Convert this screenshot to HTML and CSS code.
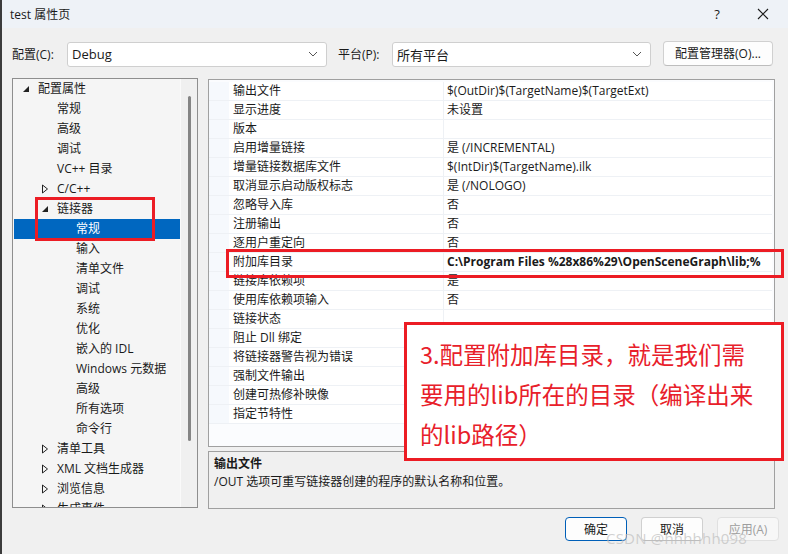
FILE: index.html
```html
<!DOCTYPE html>
<html lang="zh-CN">
<head>
<meta charset="utf-8">
<title>test 属性页</title>
<link rel="stylesheet" href="styles.css">
</head>
<body>
<div class="window">
  <div class="titlebar">
    <span class="title">test 属性页</span>
    <span class="tb-btns"><span class="tb-help">?</span><span class="tb-close">
      <svg width="12" height="12" viewBox="0 0 12 12"><path d="M1 1L11 11M11 1L1 11" stroke="#1a1a1a" stroke-width="1.1"/></svg></span></span>
  </div>

  <div class="configrow">
    <span class="lbl">配置(C):</span>
    <div class="combo combo-cfg"><span>Debug</span><svg class="chev" width="10" height="6" viewBox="0 0 10 6"><path d="M1 1L5 5L9 1" fill="none" stroke="#555" stroke-width="1"/></svg></div>
    <span class="lbl lbl-plat">平台(P):</span>
    <div class="combo combo-plat"><span>所有平台</span><svg class="chev" width="10" height="6" viewBox="0 0 10 6"><path d="M1 1L5 5L9 1" fill="none" stroke="#555" stroke-width="1"/></svg></div>
    <button class="btn btn-mgr">配置管理器(O)...</button>
  </div>

  <div class="main">
    <div class="tree">
      <div class="tree-list">
        <div class="ti l0"><svg class="arr" width="8" height="8" viewBox="0 0 8 8"><path d="M7 1V7H1Z" fill="#222"/></svg>配置属性</div>
        <div class="ti l1">常规</div>
        <div class="ti l1">高级</div>
        <div class="ti l1">调试</div>
        <div class="ti l1">VC++ 目录</div>
        <div class="ti l1c"><svg class="arr" width="8" height="10" viewBox="0 0 8 10"><path d="M1.5 1L6.5 5L1.5 9Z" fill="none" stroke="#222" stroke-width="1"/></svg>C/C++</div>
        <div class="ti l1c open"><svg class="arr" width="8" height="8" viewBox="0 0 8 8"><path d="M7 1V7H1Z" fill="#222"/></svg>链接器</div>
        <div class="ti l2 sel">常规</div>
        <div class="ti l2">输入</div>
        <div class="ti l2">清单文件</div>
        <div class="ti l2">调试</div>
        <div class="ti l2">系统</div>
        <div class="ti l2">优化</div>
        <div class="ti l2">嵌入的 IDL</div>
        <div class="ti l2">Windows 元数据</div>
        <div class="ti l2">高级</div>
        <div class="ti l2">所有选项</div>
        <div class="ti l2">命令行</div>
        <div class="ti l1c"><svg class="arr" width="8" height="10" viewBox="0 0 8 10"><path d="M1.5 1L6.5 5L1.5 9Z" fill="none" stroke="#222" stroke-width="1"/></svg>清单工具</div>
        <div class="ti l1c"><svg class="arr" width="8" height="10" viewBox="0 0 8 10"><path d="M1.5 1L6.5 5L1.5 9Z" fill="none" stroke="#222" stroke-width="1"/></svg>XML 文档生成器</div>
        <div class="ti l1c"><svg class="arr" width="8" height="10" viewBox="0 0 8 10"><path d="M1.5 1L6.5 5L1.5 9Z" fill="none" stroke="#222" stroke-width="1"/></svg>浏览信息</div>
        <div class="ti l1c"><svg class="arr" width="8" height="10" viewBox="0 0 8 10"><path d="M1.5 1L6.5 5L1.5 9Z" fill="none" stroke="#222" stroke-width="1"/></svg>生成事件</div>
      </div>
      <div class="vscroll"><div class="thumb"></div></div>
    </div>

    <div class="rightcol">
      <div class="grid">
        <div class="rows">
          <div class="row"><span class="gut"></span><span class="nm">输出文件</span><span class="val">$(OutDir)$(TargetName)$(TargetExt)</span></div>
          <div class="row"><span class="gut"></span><span class="nm">显示进度</span><span class="val">未设置</span></div>
          <div class="row"><span class="gut"></span><span class="nm">版本</span><span class="val"></span></div>
          <div class="row"><span class="gut"></span><span class="nm">启用增量链接</span><span class="val">是 (/INCREMENTAL)</span></div>
          <div class="row"><span class="gut"></span><span class="nm">增量链接数据库文件</span><span class="val">$(IntDir)$(TargetName).ilk</span></div>
          <div class="row"><span class="gut"></span><span class="nm">取消显示启动版权标志</span><span class="val">是 (/NOLOGO)</span></div>
          <div class="row"><span class="gut"></span><span class="nm">忽略导入库</span><span class="val">否</span></div>
          <div class="row"><span class="gut"></span><span class="nm">注册输出</span><span class="val">否</span></div>
          <div class="row"><span class="gut"></span><span class="nm">逐用户重定向</span><span class="val">否</span></div>
          <div class="row"><span class="gut"></span><span class="nm">附加库目录</span><span class="val bold">C:\Program Files %28x86%29\OpenSceneGraph\lib;%</span></div>
          <div class="row"><span class="gut"></span><span class="nm">链接库依赖项</span><span class="val">是</span></div>
          <div class="row"><span class="gut"></span><span class="nm">使用库依赖项输入</span><span class="val">否</span></div>
          <div class="row"><span class="gut"></span><span class="nm">链接状态</span><span class="val"></span></div>
          <div class="row"><span class="gut"></span><span class="nm">阻止 Dll 绑定</span><span class="val"></span></div>
          <div class="row"><span class="gut"></span><span class="nm">将链接器警告视为错误</span><span class="val"></span></div>
          <div class="row"><span class="gut"></span><span class="nm">强制文件输出</span><span class="val"></span></div>
          <div class="row"><span class="gut"></span><span class="nm">创建可热修补映像</span><span class="val"></span></div>
          <div class="row"><span class="gut"></span><span class="nm">指定节特性</span><span class="val"></span></div>
        </div>
      </div>
      <div class="desc">
        <div class="desc-title">输出文件</div>
        <div class="desc-text">/OUT 选项可重写链接器创建的程序的默认名称和位置。</div>
      </div>
    </div>
  </div>

  <div class="footer">
    <button class="btn fbtn default">确定</button>
    <button class="btn fbtn">取消</button>
    <button class="btn fbtn disabled">应用(A)</button>
  </div>

  <div class="mark mark-tree"></div>
  <div class="mark mark-row"></div>
  <div class="note">3.配置附加库目录，就是我们需要用的lib所在的目录（编译出来的lib路径）</div>
  <div class="wm">CSDN @hhhhhh098</div>
</div>
</body>
</html>
```

FILE: styles.css
```css
* { box-sizing: border-box; }
html, body { margin: 0; padding: 0; }
body {
  width: 788px;
  height: 554px;
  overflow: hidden;
  background: #f0f0f0;
  font-family: "Open Sans", "Noto Sans CJK SC", sans-serif;
  font-size: 12px;
  color: #1a1a1a;
}
.window {
  position: relative;
  width: 788px;
  height: 554px;
  border-left: 2px solid #3c3c3c;
  background: #f0f0f0;
}
.titlebar {
  height: 28px;
  background: #eef2f7;
  display: flex;
  align-items: center;
  justify-content: space-between;
  padding-left: 8px;
  padding-right: 2px;
}
.title { font-size: 12px; }
.tb-btns { display: flex; align-items: center; }
.tb-help { width: 46px; text-align: center; font-size: 13px; }
.tb-close { width: 46px; display: flex; justify-content: center; }

.configrow {
  display: flex;
  align-items: center;
  height: 26px;
  margin-top: 13px;
  padding-left: 10px;
}
.lbl { width: 55px; }
.lbl-plat { width: 54px; margin-left: 11px; }
.combo {
  height: 25px;
  background: #fff;
  border: 1px solid #cfcfcf;
  border-radius: 3px;
  display: flex;
  align-items: center;
  justify-content: space-between;
  padding: 0 8px 0 4px;
  font-size: 13px;
}
.combo-cfg { width: 260px; }
.combo-plat { width: 259px; }
.btn {
  font-family: inherit;
  font-size: 12px;
  color: #1a1a1a;
  background: #fdfdfd;
  border: 1px solid #d0d0d0;
  border-bottom-color: #bdbdbd;
  border-radius: 4px;
  padding: 0;
}
.btn-mgr { width: 110px; height: 25px; margin-left: 12px; margin-top: -2px; }

.main {
  display: flex;
  align-items: flex-start;
  margin-top: 11px;
  padding-left: 10px;
  height: 430px;
}
.tree {
  width: 186px;
  height: 430px;
  border: 1px solid #8e8e8e;
  background: #f5f5f5;
  display: flex;
  overflow: hidden;
}
.tree-list { flex: 1; padding-left: 1px; }
.ti {
  height: 20px;
  line-height: 20px;
  position: relative;
  white-space: nowrap;
}
.ti .arr { position: absolute; top: 6px; }
.l0 { padding-left: 24px; }
.l0 .arr { left: 8px; }
.l1 { padding-left: 43px; }
.l1c { padding-left: 43px; }
.l1c .arr { left: 27px; top: 5px; }
.l1c.open .arr { top: 6px; left: 27px; }
.l2 { padding-left: 62px; }
.sel { background: #0067c0; color: #fff; }
.vscroll {
  width: 17px;
  background: #f0f0f0;
  border-left: 1px solid #fafafa;
  position: relative;
}
.thumb {
  position: absolute;
  left: 7px;
  top: 17px;
  width: 3px;
  height: 345px;
  background: #858585;
  border-radius: 2px;
}

.rightcol {
  margin-left: 10px;
  margin-top: 1px;
  width: 567px;
  display: flex;
  flex-direction: column;
  gap: 4px;
}
.grid {
  height: 368px;
  border: 1px solid #a0a0a0;
  background: #fbfcfe;
  padding-top: 2px;
  padding-right: 2px;
}
.rows { background: #fff; }
.row {
  display: flex;
  height: 19px;
  line-height: 18px;
  border-bottom: 1px solid #eef1f5;
}
.gut { width: 20px; background: #f6f9fd; flex: none; }
.nm { width: 215px; flex: none; padding-left: 4px; border-right: 1px solid #eef1f5; white-space: nowrap; }
.val { flex: 1; padding-left: 3px; white-space: nowrap; overflow: hidden; }
.bold { font-weight: 700; }
.desc {
  height: 58px;
  border: 1px solid #a0a0a0;
  padding: 3px 5px;
  line-height: 18px;
}
.desc-title { font-weight: 700; }

.footer {
  display: flex;
  justify-content: flex-end;
  gap: 14px;
  padding-right: 9px;
  margin-top: 9px;
}
.fbtn { width: 62px; height: 24px; }
.default { border: 1px solid #005fb8; }
.disabled { color: #9e9e9e; background: #f7f7f7; border-color: #e0e0e0; }

.mark {
  position: absolute;
  border: 3px solid #ec1c24;
}
.mark-tree { left: 33px; top: 197px; width: 120px; height: 44px; }
.mark-row { left: 224px; top: 249px; width: 558px; height: 29px; }
.note {
  position: absolute;
  left: 402px;
  top: 322px;
  width: 380px;
  height: 139px;
  border: 3px solid #ec1c24;
  background: #fff;
  color: #e8202a;
  font-family: "Noto Sans CJK SC", sans-serif;
  font-size: 23.5px;
  line-height: 40px;
  padding: 9px 14px 0 13px;
}
.wm {
  position: absolute;
  left: 604px;
  top: 528px;
  font-family: "Open Sans", sans-serif;
  font-size: 15px;
  color: rgba(190, 190, 190, 0.7);
  letter-spacing: 0.2px;
}
```
